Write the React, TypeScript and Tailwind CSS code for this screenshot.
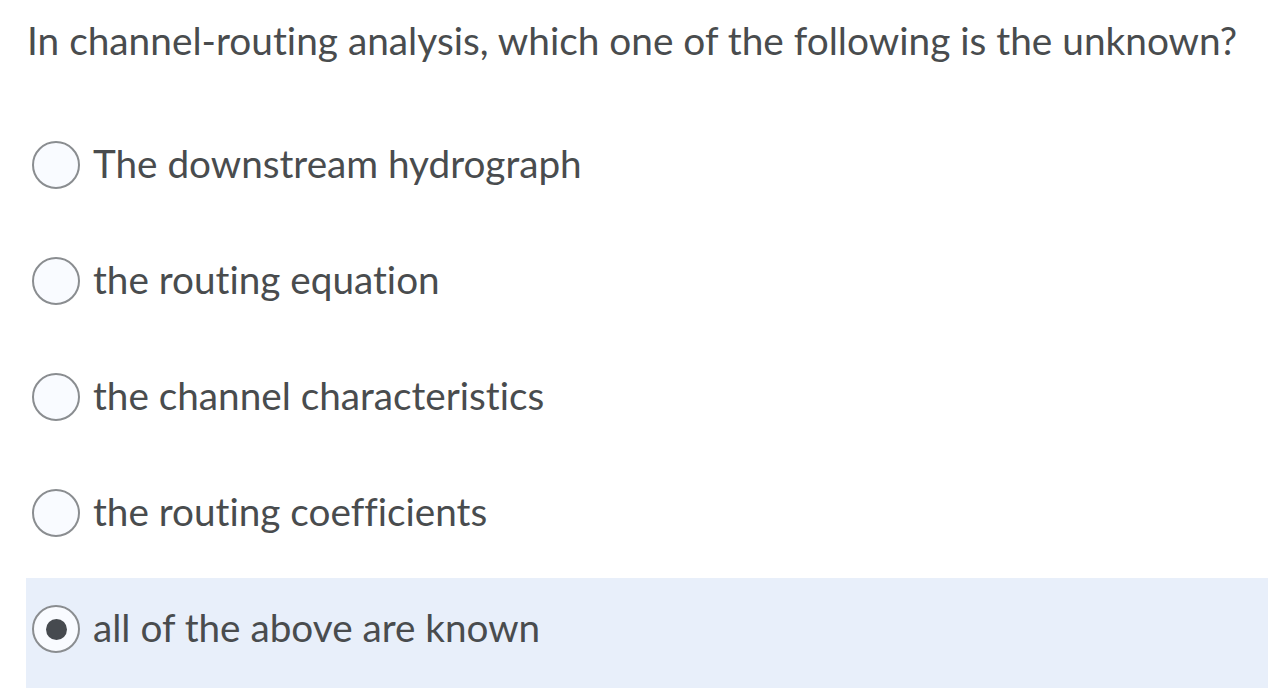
import React from "react";

const options = [
  "The downstream hydrograph",
  "the routing equation",
  "the channel characteristics",
  "the routing coefficients",
  "all of the above are known",
];

export default function App() {
  const selected = 4;
  return (
    <div
      className="w-[1268px] h-[688px] overflow-hidden bg-white text-[#494c4e]"
      style={{ fontFamily: "Lato, 'Noto Sans', 'Liberation Sans', sans-serif", fontVariantLigatures: "none" }}
    >
      <div className="pl-[26px]">
        <h1 className="h-[64px] pt-[17px] pl-[1px] text-[38.8px] leading-[1.2] font-normal whitespace-nowrap">
          In channel-routing analysis, which one of the following is the unknown?
        </h1>
        <div className="mt-[50px] flex flex-col gap-[14px]">
          {options.map((o, i) => {
            const sel = i === selected;
            return (
              <div
                key={o}
                className={
                  sel
                    ? "h-[110px] pb-[8px] flex items-center bg-[#e8effa]"
                    : "h-[102px] flex items-center"
                }
              >
                <div className="ml-[6px] w-[48px] h-[48px] rounded-full border-2 border-[#8a8d90] bg-[#f9fbff] flex items-center justify-center shrink-0">
                  {sel && <div className="w-[21px] h-[21px] rounded-full bg-[#464a4f]" />}
                </div>
                <span className="ml-[13px] text-[38.7px] leading-[1.2] -mt-[3px] whitespace-nowrap">{o}</span>
              </div>
            );
          })}
        </div>
      </div>
    </div>
  );
}
